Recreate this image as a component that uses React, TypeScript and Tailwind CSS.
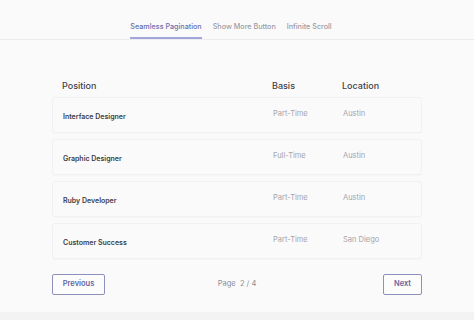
import { useState } from 'react'

const jobs = [
  { position: 'Interface Designer', basis: 'Part-Time', location: 'Austin' },
  { position: 'Graphic Designer', basis: 'Full-Time', location: 'Austin' },
  { position: 'Ruby Developer', basis: 'Part-Time', location: 'Austin' },
  { position: 'Customer Success', basis: 'Part-Time', location: 'San Diego' },
]

const tabs = ['Seamless Pagination', 'Show More Button', 'Infinite Scroll']

export default function App() {
  const [active, setActive] = useState(0)

  return (
    <div className="w-[474px] h-[320px] bg-[#f3f3f4] font-['Inter',sans-serif] overflow-hidden">
      <div className="h-[312px] bg-[#fafafa]">
        <nav className="h-[40px] border-b border-[#ececee] flex justify-center items-end gap-[11px] pr-[12px]">
          {tabs.map((t, i) => (
            <button
              key={t}
              onClick={() => setActive(i)}
              className={
                i === active
                  ? 'pb-[4px] text-[7.2px] font-medium text-[#6a6fb0] border-b-2 border-[#a3a6db]'
                  : 'pb-[4px] text-[7.2px] font-medium text-[#9a9aa2] border-b-2 border-transparent'
              }
            >
              {t}
            </button>
          ))}
        </nav>

        <div className="w-[370px] mx-auto">
          <div className="grid grid-cols-[210px_70px_1fr] px-[10px] pt-[39px] pb-[4px] text-[9px] font-medium text-[#3f3f48]">
            <span>Position</span>
            <span>Basis</span>
            <span>Location</span>
          </div>

          <div className="flex flex-col gap-[6px]">
            {jobs.map((j) => (
              <div
                key={j.position}
                className="h-[36px] grid grid-cols-[210px_70px_1fr] px-[10px] bg-[#fafafa] border border-[#f1f1f3] rounded-[3px] shadow-[0_1px_1px_rgba(0,0,0,0.02)]"
              >
                <span className="pt-[14px] text-[7px] font-semibold text-[#3d3d46]">{j.position}</span>
                <span className="pt-[10px] text-[7.5px] text-[#a4a4ab]">{j.basis}</span>
                <span className="pt-[10px] text-[7.5px] text-[#a4a4ab]">{j.location}</span>
              </div>
            ))}
          </div>

          <div className="flex items-center justify-between mt-[15px]">
            <button className="w-[53px] h-[21px] border border-[#8d8fbd] rounded-[2px] text-[7.5px] font-semibold text-[#62669f] bg-[#fcfcfd]">
              Previous
            </button>
            <span className="text-[7.5px] text-[#8e8e96] pr-[14px]">Page&nbsp; 2 / 4</span>
            <button className="w-[39px] h-[21px] border border-[#8d8fbd] rounded-[2px] text-[7.5px] font-semibold text-[#62669f] bg-[#fcfcfd]">
              Next
            </button>
          </div>
        </div>
      </div>
    </div>
  )
}
